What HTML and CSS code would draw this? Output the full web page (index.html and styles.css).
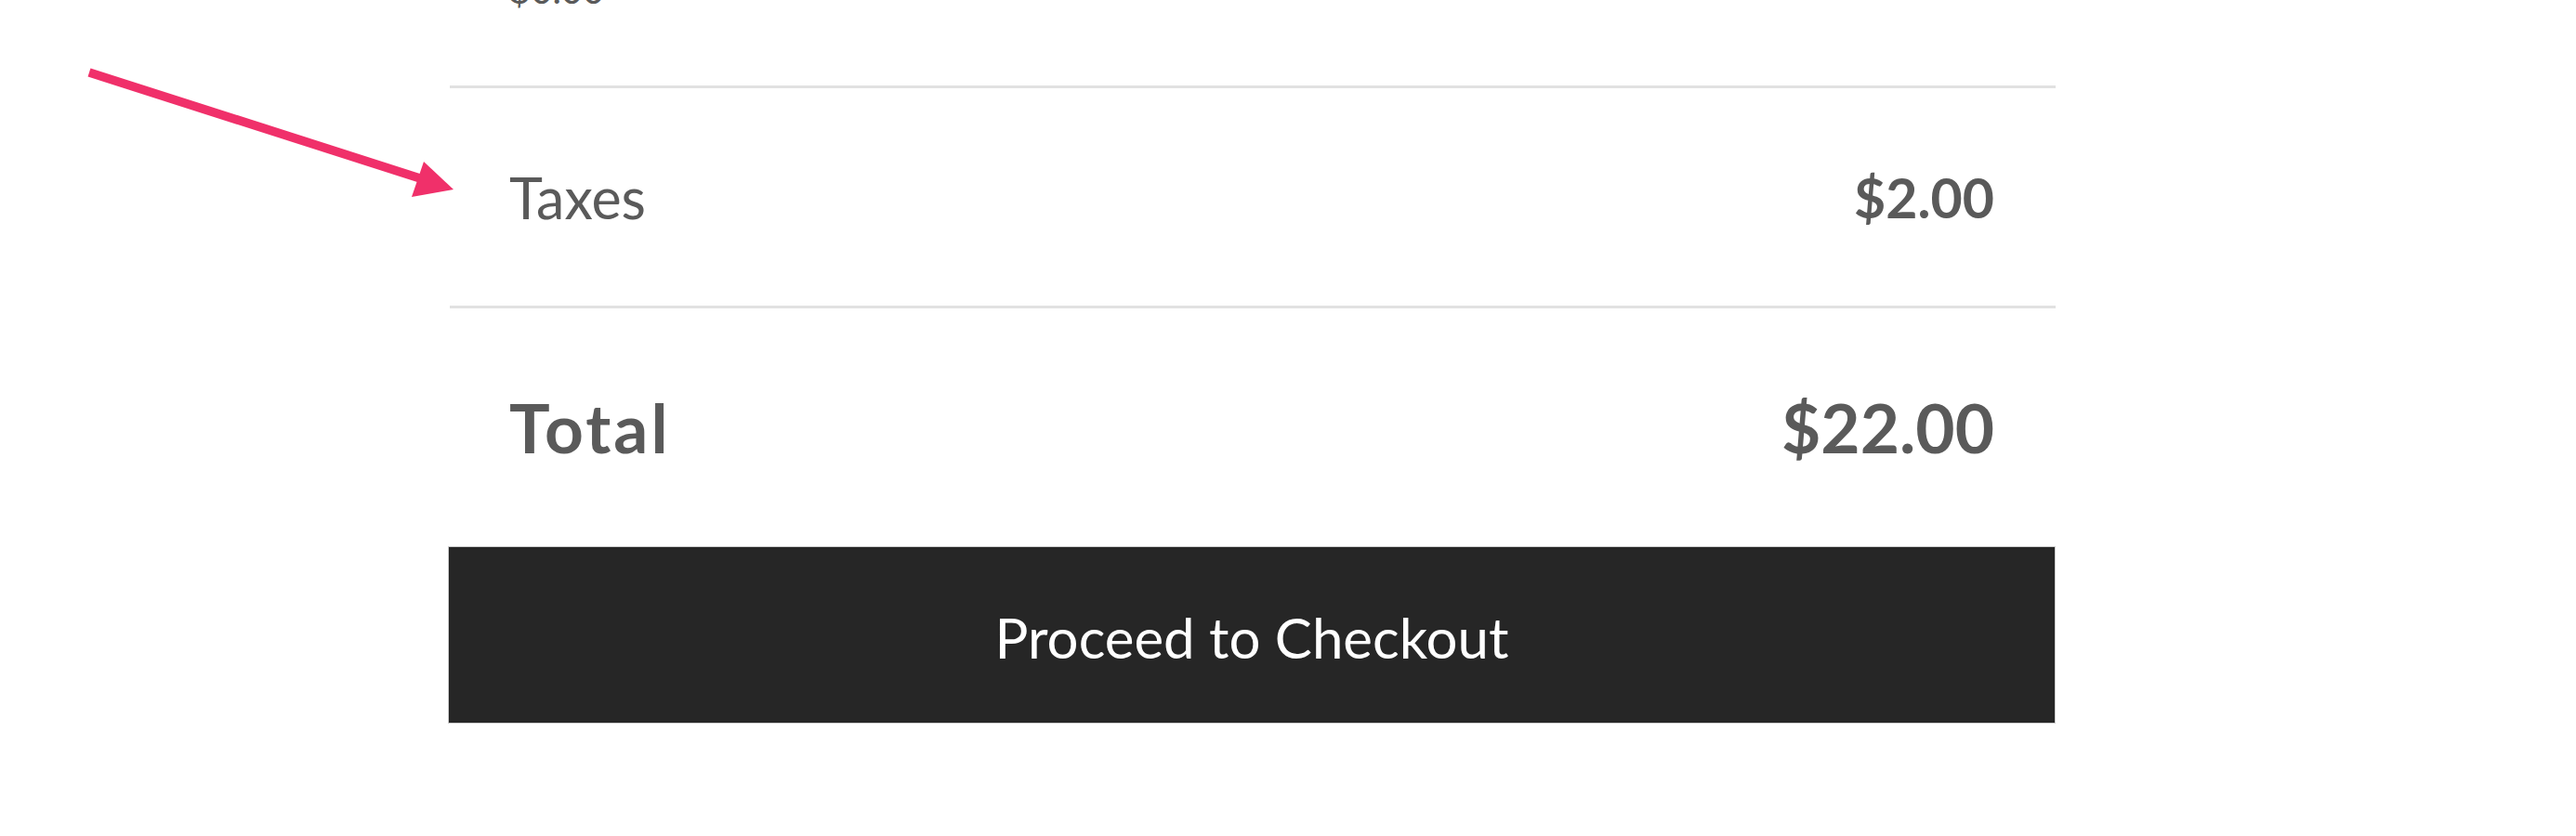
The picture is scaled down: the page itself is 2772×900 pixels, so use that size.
FILE: index.html
```html
<!DOCTYPE html>
<html lang="en">
<head>
<meta charset="utf-8">
<title>Cart totals</title>
<link rel="stylesheet" href="styles.css">
</head>
<body>
<div class="page">
  <section class="cart-totals">
    <div class="row row-shipping">
      <span class="shipping-amount">$0.00</span>
    </div>
    <div class="row row-taxes">
      <span class="label">Taxes</span>
      <span class="amount">$2.00</span>
    </div>
    <div class="row row-total">
      <span class="label">Total</span>
      <span class="amount">$22.00</span>
    </div>
    <a class="checkout" href="#">Proceed to Checkout</a>
  </section>
  <svg class="annotation" width="600" height="260" viewBox="0 0 600 260" aria-hidden="true">
    <line x1="96" y1="78" x2="452" y2="192" stroke="#f0306a" stroke-width="9.5" stroke-linecap="butt"/>
    <polygon points="456,174 488,204 443,212" fill="#f0306a"/>
  </svg>
</div>
</body>
</html>
```

FILE: styles.css
```css
html, body {
  margin: 0;
  padding: 0;
  background: #ffffff;
}

.page {
  position: relative;
  width: 2772px;
  height: 900px;
  overflow: hidden;
  font-family: "Lato", "Liberation Sans", sans-serif;
  color: #5a5a5a;
}

.cart-totals {
  margin-left: 484px;
  width: 1728px;
  display: flex;
  flex-direction: column;
}

.row {
  display: flex;
  align-items: center;
  justify-content: space-between;
  box-sizing: border-box;
  padding: 0 66px 0 64px;
}

.row-shipping {
  height: 92px;
  align-items: flex-start;
}

.shipping-amount {
  display: block;
  font-size: 40px;
  line-height: 40px;
  margin-top: -31px;
}

.row-taxes {
  height: 240px;
  border-top: 3px solid #e1e1e1;
  border-bottom: 3px solid #e1e1e1;
  font-size: 61px;
}

.row-taxes .amount {
  font-weight: 700;
  font-size: 59px;
}

.row-total {
  height: 256px;
  font-size: 73px;
  font-weight: 700;
}

.row-total .label {
  letter-spacing: 3px;
}

.label, .amount {
  line-height: 1;
}

.checkout {
  display: flex;
  align-items: center;
  justify-content: center;
  box-sizing: border-box;
  height: 191px;
  background: #262626;
  border: 1px solid #cfcfcf;
  color: #ffffff;
  font-size: 60px;
  text-decoration: none;
  margin-left: -2px;
  padding-top: 4px;
}

.annotation {
  position: absolute;
  left: 0;
  top: 0;
}
```
